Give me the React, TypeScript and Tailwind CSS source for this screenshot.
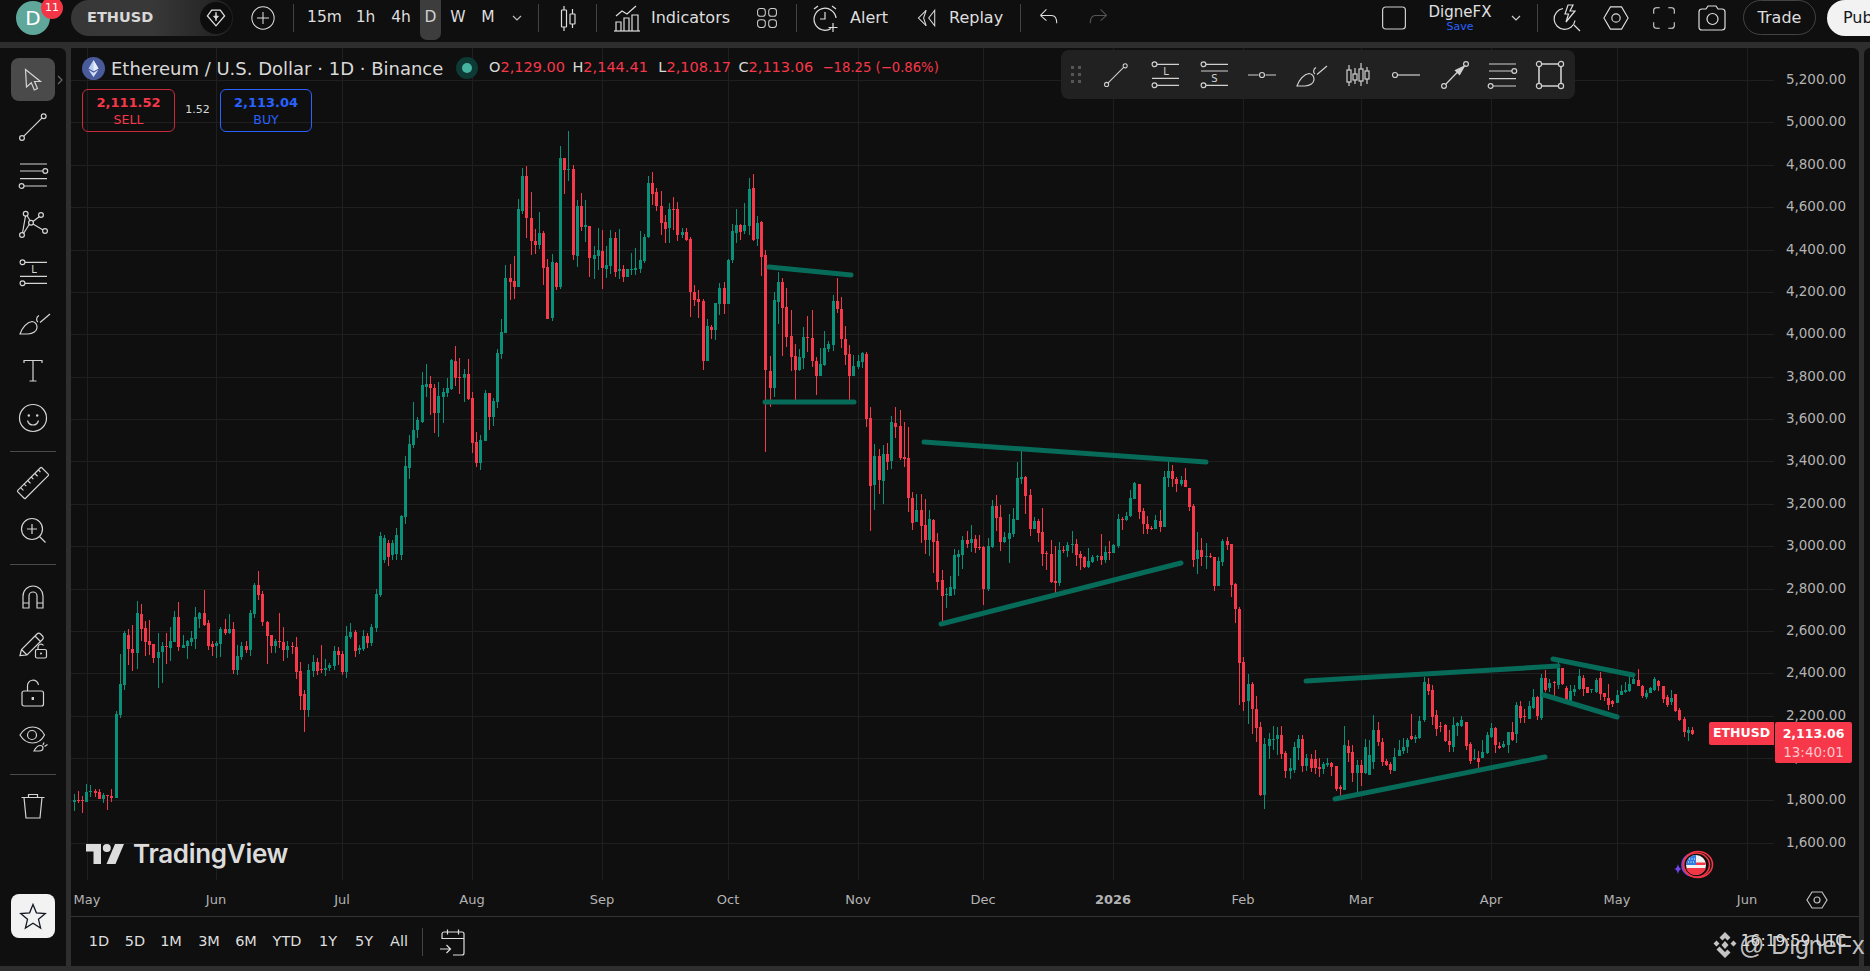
import React from 'react';

// candle data read off the chart: "X colour high top bottom low", in the crop coords of each segment
const SEGMENTS = [
  { x0: 70, y0: 560, rows: `13 g 702 720 726 753,25 r 693 720 723 729,37 r 708 720 723 759,49 g 672 696 726 726,61 g 675 693 696 711,76 r 687 693 699 711,88 r 687 696 717 717,100 g 699 705 717 729,112 r 705 705 708 750,124 r 687 708 714 726,139 g 453 462 714 714,151 g 282 372 465 474,163 g 213 219 375 390,175 r 207 225 267 315,187 r 195 267 279 333,202 g 123 159 279 327,214 r 132 162 207 243,226 r 183 204 246 288,238 r 180 243 255 285,250 r 252 252 294 309,265 g 219 276 294 384,277 g 246 258 276 369,289 r 219 258 261 312,301 g 201 243 264 303,313 g 153 171 246 246,325 r 126 171 261 273,340 g 225 255 264 264,352 g 240 243 258 297,364 g 213 234 246 258,376 g 141 171 237 267,388 g 156 159 177 204,403 r 90 159 195 198,415 r 180 189 258 270,427 r 243 252 261 288,439 g 243 249 258 294,451 g 201 207 252 291,466 r 177 207 219 225,478 g 162 207 219 222,490 r 186 207 330 342,502 g 255 288 330 345,514 g 246 258 291 300,529 r 243 258 270 279,541 g 150 159 270 288,553 g 69 75 162 174,565 r 33 75 105 120,577 r 93 102 186 198,592 r 183 186 228 312,604 r 225 225 258 279,616 g 237 243 258 279,628 r 159 243 246 264,640 r 201 246 270 303,652 g 243 258 270 294,667 r 246 258 261 282,679 r 231 261 336 357,691 r 306 333 408 450,703 r 390 402 450 516,715 g 312 330 450 471,730 g 285 306 333 351,742 r 294 306 333 345,754 r 255 327 330 339,766 g 297 324 330 348,778 g 309 315 324 333,793 g 258 273 318 330,805 r 261 273 285 315,817 r 273 282 336 345,829 g 198 228 336 354,841 g 189 216 231 237,856 r 210 216 273 291,868 g 255 264 270 282,880 g 210 228 267 273,892 r 219 228 249 264,904 g 192 201 249 258,919 g 87 102 204 216` },
  { x0: 70, y0: 130, rows: `931 g 1206 1218 1395 1401,943 g 1215 1225 1290 1299,955 r 1230 1240 1280 1308,967 g 1230 1240 1275 1290,979 g 1195 1215 1272 1290,994 g 1155 1158 1275 1290,1006 g 978 1008 1160 1182,1018 g 915 942 1013 1047,1030 g 816 900 945 954,1042 g 862 870 900 924,1057 g 726 765 876 879,1069 g 702 762 771 801,1081 r 738 762 774 855,1093 r 762 774 849 908,1105 g 756 798 849 921,1120 g 774 786 801 879,1132 g 744 774 789 801,1144 g 687 690 777 780,1156 r 648 693 744 768,1168 r 684 741 744 792,1183 g 717 732 744 816,1195 r 687 732 807 810,1207 r 786 804 939 969,1219 r 906 936 999 1011,1231 g 915 930 999 1020,1246 g 780 789 933 933,1258 r 789 789 861 900,1270 g 804 813 861 888,1282 g 657 669 816 834,1294 g 567 606 672 687,1306 g 405 444 609 609,1321 r 402 444 456 510,1333 r 378 453 471 507,1345 g 207 237 471 471,1357 g 114 138 243 252,1369 r 108 138 264 324,1384 r 186 264 333 375,1396 r 297 333 345 372,1408 g 246 309 345 357,1420 r 303 309 414 465,1432 r 387 411 567 567,1447 g 372 396 564 573,1459 r 396 399 471 480,1471 g 48 84 471 477,1483 r 84 84 120 192,1495 g 3 117 120 153` },
  { x0: 500, y0: 130, rows: `220 r 105 117 375 390,232 g 210 228 378 411,244 r 189 228 291 303,256 g 210 285 291 336,268 r 288 288 384 441,283 g 348 375 387 447,295 g 294 360 378 420,307 r 300 363 414 477,319 g 348 405 417 444,331 g 300 324 408 432,346 r 306 324 426 441,358 g 297 417 423 447,370 r 405 417 441 456,382 g 417 417 441 441,394 g 369 417 420 435,406 g 354 414 420 435,421 g 303 390 417 429,433 g 312 321 393 399,445 g 138 159 321 324,457 r 126 159 192 225,469 r 174 186 228 243,484 r 183 228 279 315,496 r 255 276 297 339,508 g 219 237 294 339,520 r 201 237 240 300,532 r 216 237 315 333,547 g 294 306 315 324,559 r 294 306 330 333,571 r 321 327 486 561,583 r 465 486 510 528,595 r 480 507 516 564,610 r 507 513 693 720,622 g 567 588 693 693,634 r 585 591 600 627,646 g 519 519 600 630,658 g 459 474 522 555,673 r 456 474 522 552,685 g 387 390 522 522,697 g 282 303 390 399,709 g 237 285 309 339,721 r 282 285 306 330,733 g 219 285 303 312,748 g 144 177 288 315,760 r 132 174 330 333,772 g 258 279 327 348,784 r 273 276 381 438,796 r 360 375 720 966,811 r 678 723 774 831,823 g 486 510 774 801,835 g 426 456 516 582,847 r 444 456 534 678,859 r 474 531 621 651,874 r 540 618 681 723,886 r 642 678 720 816,898 g 657 681 720 723,910 g 591 621 684 717,922 r 558 621 624 666,937 r 540 624 693 711,949 r 681 693 738 795,961 g 654 702 738 738,973 g 603 654 705 708,985 g 633 642 657 666,1000 g 495 513 645 663,1012 r 444 513 537 549,1024 r 501 537 627 654,1036 r 588 627 675 705,1048 r 645 672 738 813,1060 g 675 708 738 738,1075 g 675 693 711 717,1087 g 666 669 696 714,1099 r 666 672 867 891,1111 r 831 864 1068 1203,1123 g 942 978 1065 1140,1138 r 957 978 1050 1092,1150 g 945 972 1053 1122,1162 r 939 972 996 1020,1174 g 858 876 993 1017,1186 r 831 879 891 924,1201 r 840 888 984 990,1213 r 876 981 987 1011,1225 r 891 984 1104 1146` },
  { x0: 900, y0: 420, rows: `37 r 216 234 309 330,49 g 222 270 306 306,64 r 222 270 318 369,76 r 237 315 360 402,88 g 270 297 360 408,100 r 297 300 366 459,112 r 339 363 486 510,127 r 450 480 528 618,139 g 504 522 525 564,151 g 468 501 528 528,163 g 387 405 507 525,175 g 390 402 411 468,187 g 348 360 405 447,202 r 333 360 372 384,214 g 315 357 369 396,226 r 345 357 384 399,238 r 345 381 384 390,250 r 378 381 507 555,265 g 354 378 507 513,277 g 240 258 381 384,289 r 225 258 294 333,301 r 255 291 366 393,313 g 336 351 366 369,328 g 282 339 357 429,340 g 264 297 342 351,352 g 126 174 300 300,364 g 93 171 177 192,376 r 168 171 228 282,391 r 207 225 327 348,403 g 291 303 327 327,415 r 297 303 339 366,427 r 264 336 402 438,439 r 393 399 402 450,454 r 360 402 486 489,466 r 378 483 489 519,478 g 366 390 489 498,490 r 378 390 393 399,502 g 366 375 393 411,517 g 333 372 375 399,529 r 357 372 405 438,541 r 393 402 414 450,553 r 408 411 441 444,565 g 384 423 441 444,577 g 405 411 426 429,592 g 405 408 411 423,604 r 342 408 420 435,616 g 378 396 420 429,628 r 363 396 399 420,640 g 372 375 399 399,655 g 282 297 378 384,667 r 291 297 300 330,679 g 276 288 300 303,691 g 210 234 288 291,703 g 186 189 237 237,718 r 192 192 276 297,730 r 264 273 312 342,742 r 288 312 327 342,754 r 318 324 327 330,766 g 285 300 327 327,781 r 270 303 321 336,793 g 153 171 321 321,805 g 120 153 174 201,817 r 135 153 177 201,829 r 171 177 192 216,844 g 168 180 192 198,856 r 144 180 201 201,868 r 204 204 261 273,880 r 252 258 420 441,892 g 336 390 417 462,904 r 354 390 411 438,919 g 369 408 411 447,931 r 399 408 411 414,943 r 411 411 498 513,955 g 411 423 498 498,967 g 357 363 426 438,982 r 351 363 375 390,994 r 372 372 495 531,1006 r 489 492 567 609,1018 r 561 567 729 855,1030 r 711 726 846 873,1045 g 762 792 843 912,1057 r 786 792 867 942,1069 r 828 867 924 966,1081 r 906 921 1125 1128,1093 g 954 972 1125 1167,1108 g 939 957 978 1017,1120 g 918 957 960 990,1132 g 921 945 957 1005,1144 r 918 945 1002 1017,1156 r 993 999 1053 1074,1171 g 1014 1044 1053 1077,1183 g 966 981 1050 1059,1195 g 945 957 984 1020` },
  { x0: 1250, y0: 620, rows: `157 r 345 357 438 456,169 g 402 414 438 453,184 r 402 417 444 456,196 r 390 417 444 462,208 r 414 441 447 471,220 g 426 432 447 462,232 g 414 429 435 441,244 r 426 429 441 468,259 r 438 438 507 513,271 r 495 501 507 540,283 g 318 375 510 510,295 r 360 378 399 426,307 r 375 396 459 486,322 g 420 435 459 516,334 r 420 435 459 498,346 g 357 381 459 462,358 g 360 405 465 465,370 g 285 330 426 447,385 r 306 330 366 378,397 r 354 366 426 438,409 r 417 423 435 438,421 r 426 432 450 462,433 g 384 411 453 453,448 g 360 390 408 408,460 g 354 381 393 402,472 g 354 360 381 399,484 r 282 348 357 360,496 g 345 351 357 369,508 g 288 303 354 357,523 g 171 186 300 306,535 r 174 192 213 225,547 r 195 210 291 315,559 r 270 285 327 348,571 r 306 318 321 336,586 r 312 315 363 366,598 r 330 363 375 396,610 g 291 315 381 396,622 g 306 309 318 348,634 g 288 300 318 321,649 r 306 306 378 390,661 r 366 372 423 432,673 g 387 414 417 420,685 r 393 414 426 447,697 g 360 396 414 414,712 g 336 345 399 402,724 g 309 324 351 354,736 r 321 324 375 399,748 r 366 378 384 387,760 g 363 372 381 384,775 g 336 336 375 399,787 r 306 336 360 363,799 g 246 255 342 369,811 r 243 258 294 309,823 r 267 288 291 309,838 g 243 258 297 297,850 g 207 231 264 267,862 r 228 231 288 300,874 g 162 174 294 300,886 r 150 174 210 216,898 g 177 189 204 216,913 r 183 186 189 231,925 g 117 144 195 207,937 r 144 144 192 195,949 r 198 204 246 249,961 g 195 213 246 249,973 g 195 207 216 228,988 g 147 168 207 210,1000 r 165 174 207 228,1012 r 201 201 219 219,1024 g 207 207 210 219,1039 g 174 180 216 219,1051 r 156 174 222 240,1063 r 219 219 231 243,1075 r 192 234 255 270,1087 r 240 243 252 261,1102 g 210 225 249 249,1114 g 195 213 225 225,1126 g 186 210 216 219,1138 g 159 192 213 216,1150 g 162 177 192 192,1165 r 147 180 198 198,1177 r 195 198 228 234,1189 g 210 219 231 237,1201 g 201 204 219 219,1213 g 171 177 210 213,1225 r 180 183 198 213,1240 r 198 198 237 249,1252 r 225 231 255 261,1264 g 210 234 246 255,1276 r 222 222 273 276,1288 r 264 270 300 303,1303 r 291 297 336 351,1315 g 321 330 339 363,1327 r 321 330 342 345` },
];

const candles = SEGMENTS.flatMap((seg) =>
  seg.rows.split(',').map((row) => {
    const [X, c, hi, top, bot, lo] = row.split(' ');
    const conv = (v: string) => Math.round(seg.y0 + Number(v) / 3);
    return {
      x: Math.round(seg.x0 + Number(X) / 3),
      up: c === 'g',
      hi: conv(hi),
      top: conv(top),
      bot: conv(bot),
      lo: conv(lo),
    };
  })
);

const TREND_LINES = [
  [769, 267, 851, 275],
  [765, 402, 854, 402],
  [924, 442, 1206, 462],
  [941, 624, 1181, 563],
  [1306, 681, 1558, 666],
  [1335, 799, 1545, 757],
  [1553, 659, 1633, 675],
  [1544, 695, 1617, 717],
];

const PRICES = ['5,200.00', '5,000.00', '4,800.00', '4,600.00', '4,400.00', '4,200.00', '4,000.00', '3,800.00', '3,600.00', '3,400.00', '3,200.00', '3,000.00', '2,800.00', '2,600.00', '2,400.00', '2,200.00', '2,000.00', '1,800.00', '1,600.00'];

const GRID_X = [87, 216, 342, 472, 602, 728, 858, 983, 1113, 1243, 1361, 1491, 1617, 1747];
const TIME_LABELS = ['May', 'Jun', 'Jul', 'Aug', 'Sep', 'Oct', 'Nov', 'Dec', '2026', 'Feb', 'Mar', 'Apr', 'May', 'Jun'];

const RED = '#f7374a';
const GREEN = '#089078';

type IcProps = { s?: number; children: React.ReactNode; className?: string };

const Ic = ({ s = 28, children, className }: IcProps) => (
  <svg width={s} height={s} viewBox="0 0 28 28" fill="none" stroke="currentColor" strokeWidth={1.2} className={`shrink-0 overflow-visible ${className ?? ''}`}>
    {children}
  </svg>
);

const LineIcon = ({ s = 28 }: { s?: number }) => (
  <Ic s={s}><path d="M4.8 23.2 22.9 5.1" /><circle cx="3" cy="25" r="2.4" /><circle cx="24.7" cy="3.3" r="2.4" /></Ic>
);
const FibIcon = ({ s = 28 }: { s?: number }) => (
  <Ic s={s}>
    <path d="M1 3h27M1 10h23M1 17.7h27M5 25h23" />
    <circle cx="26.3" cy="10" r="2.4" /><circle cx="2.6" cy="25" r="2.4" />
  </Ic>
);
const XabcdIcon = () => (
  <Ic>
    <path d="M3.5 23 6.500 6M8 5.500l3 5M14 11.500l6.500-5M14 14l10 6M10.500 14 4.500 23.500" />
    <circle cx="6.700" cy="3.700" r="2.400" /><circle cx="22" cy="5" r="2.400" /><circle cx="3" cy="25" r="2.400" /><circle cx="26" cy="21" r="2.400" /><circle cx="12" cy="12.700" r="2.400" />
  </Ic>
);
const LongIcon = ({ s = 28 }: { s?: number }) => (
  <Ic s={s}>
    <path d="M6 3.300h22M1 17.300h27M6 24.300h22" /><circle cx="3.500" cy="3.300" r="2.400" /><circle cx="3.500" cy="24.300" r="2.400" />
    <text x="15" y="14" fontSize="10" textAnchor="middle" fill="currentColor" stroke="none" fontFamily="'DejaVu Sans', sans-serif">L</text>
  </Ic>
);
const ShortIcon = () => (
  <Ic>
    <path d="M6 3.300h22M1 10h27M6 24.300h22" /><circle cx="3.500" cy="3.300" r="2.400" /><circle cx="3.500" cy="24.300" r="2.400" />
    <text x="14.500" y="21" fontSize="10" textAnchor="middle" fill="currentColor" stroke="none" fontFamily="'DejaVu Sans', sans-serif">S</text>
  </Ic>
);
const BrushIcon = () => (
  <Ic>
    <path d="M1 25h8c5 0 9-3 9-6.500 0-3-2-5.500-5-6C8 13 3 19 1 25Z" />
    <path d="M19 13c-2-1-2-5 1-6.500M21 13.500 31 5" />
  </Ic>
);
const SmileIcon = () => (
  <Ic>
    <circle cx="14" cy="14" r="13.500" /><path d="M8.500 16.500c1 3.500 3 4.500 5.500 4.500s4.500-1 5.500-4.500" />
    <circle cx="9.800" cy="11.500" r="1.200" fill="currentColor" stroke="none" /><circle cx="18.200" cy="11.500" r="1.200" fill="currentColor" stroke="none" />
  </Ic>
);
const RulerIcon = () => (
  <Ic>
    <g transform="rotate(-45 14 14)">
      <rect x="-3" y="8.500" width="34" height="11" rx="1" />
      <path d="M2 8.500v4M7 8.500v3M12 8.500v4M17 8.500v3M22 8.500v4M27 8.500v3" />
    </g>
  </Ic>
);
const ZoomIcon = () => (
  <Ic>
    <circle cx="13" cy="13" r="10.500" /><path d="M13 8v10M8 13h10M20.500 20.500l6 6" />
  </Ic>
);
const MagnetIcon = () => (
  <Ic><path d="M4 25V13a10 10 0 0 1 20 0v12h-6V13a4 4 0 0 0-8 0v12ZM4 20h6M18 20h6" /></Ic>
);
const PencilLockIcon = () => (
  <Ic>
    <path d="M1 24.500 2.500 18.500 18 3c1-1 2.500-1 3.500 0l2 2c1 1 1 2.500 0 3.500L8 24Z M16 5l6 6M2.500 18.500l5.500 5.500" />
    <rect x="16.500" y="18.500" width="11" height="8.500" rx="1.500" stroke="#0f0f0f" strokeWidth="3" fill="#0f0f0f" />
    <rect x="16.500" y="18.500" width="11" height="8.500" rx="1.500" />
    <path d="M19 18.500v-2.500a3 3 0 0 1 5.500-1.500" /><circle cx="22" cy="22.500" r="1" fill="currentColor" stroke="none" />
  </Ic>
);
const LockIcon = () => (
  <Ic>
    <rect x="3" y="12" width="21.500" height="15" rx="2" /><path d="M8.500 12V7.500a5.500 5.500 0 0 1 11-1.500" />
    <path d="M13.800 18v3" strokeWidth="2.400" />
  </Ic>
);
const EyeIcon = () => (
  <Ic>
    <path d="M1 11c3-5 7.500-8 12.500-8S23 6 25.500 11c-2.500 5-7 8-12 8S4 16 1 11Z" /><circle cx="13" cy="11" r="4.500" />
    <path d="M15 27h5c3 0 4-1.500 4-3 0-1.500-1-2.500-2.500-2.500C19 21.500 16.500 24 15 27ZM24 21l1-2.500M25.500 22.500l3-2" />
  </Ic>
);
const TrashIcon = () => (
  <Ic>
    <path d="M2.500 5.500h23M5 5.500 7 26h14l2-20.500M9.500 5.500V2.500h9v3" />
  </Ic>
);
const StarIcon = () => (
  <svg width="28" height="28" viewBox="0 0 28 28" fill="none" stroke="#131722" strokeWidth="1.300">
    <path d="M14 2.500 17.400 10.800 26.300 11.500 19.500 17.300 21.600 26 14 21.300 6.400 26 8.500 17.300 1.700 11.500 10.600 10.800Z" />
  </svg>
);

const CellBtn = ({ className, children }: { className: string; children: React.ReactNode }) => (
  <div className={`flex items-center justify-center shrink-0 ${className}`}>{children}</div>
);

const Sep = ({ className }: { className: string }) => <div className={`w-px h-7 bg-[#434343] shrink-0 ${className}`} />;

const Header = () => (
  <header className="h-[42px] shrink-0 flex items-center pb-[6px] bg-[#0f0f0f] text-[#dedede] text-[16px]">
    <div className="relative ml-4 w-[34px] h-[34px] rounded-full bg-[#5fa79a] flex items-center justify-center text-white text-[20px] shrink-0">
      D
      <div className="absolute -top-[4px] left-[25px] w-[22px] h-[22px] rounded-full bg-[#f23645] flex items-center justify-center text-[11px] text-white">11</div>
    </div>
    <div className="ml-[21px] w-[162px] h-[36px] self-start rounded-full bg-gradient-to-r from-[#373737] via-[#383838] to-[#1f1f1f] flex items-center justify-between pl-4 pr-[1px] shrink-0">
      <span className="font-bold text-[14.5px] text-[#d8d8d8]">ETHUSD</span>
      <div className="w-[32px] h-[32px] rounded-full bg-[#0d0d0d] flex items-center justify-center text-[#e0e0e0]">
        <Ic s={20}><path d="M8 3h12l6 8-12 14L2 11Z" strokeWidth="1.800" /><path d="M14 6v12" strokeWidth="2" /><path d="M10.500 11.500h7L14 15Z" fill="currentColor" /></Ic>
      </div>
    </div>
    <CellBtn className="w-[60px]">
      <Ic s={24}><circle cx="14" cy="14" r="13" /><path d="M14 7v14M7 14h14" /></Ic>
    </CellBtn>
    <Sep className="" />
    <CellBtn className="w-[49px] ml-[6px] text-[15.5px]">15m</CellBtn>
    <CellBtn className="w-[33px] text-[15.5px]">1h</CellBtn>
    <CellBtn className="w-[38px] text-[15.5px]">4h</CellBtn>
    <CellBtn className="w-[21px] h-10 self-start rounded-b-[7px] bg-[#3d3d3d] text-[#d0d0d0] text-[15.5px] pb-[4px]">D</CellBtn>
    <CellBtn className="w-[34px] text-[15.5px]">W</CellBtn>
    <CellBtn className="w-[26px] text-[15.5px]">M</CellBtn>
    <CellBtn className="w-[32px]">
      <svg width="12" height="12" viewBox="0 0 12 12" fill="none" stroke="#bdbdbd" strokeWidth="1.200"><path d="M2 4l4 4 4-4" /></svg>
    </CellBtn>
    <Sep className="ml-[5px]" />
    <CellBtn className="w-[57px]">
      <Ic>
        <path d="M10 2v4M10 23v4M18.500 5v5M18.500 20v4" />
        <rect x="7.500" y="6" width="5" height="17" rx="0.500" /><rect x="16" y="10" width="5" height="10" rx="0.500" />
      </Ic>
    </CellBtn>
    <Sep className="" />
    <div className="ml-[17px] shrink-0">
      <Ic>
        <path d="M2 12 8 7l5 3 9-8" /><path d="M2 27v-9h5v9M10 27V14h5v13M18 27V11h6v16" /><path d="M0 27h26" />
      </Ic>
    </div>
    <span className="ml-[9px] w-[80px] shrink-0 whitespace-nowrap">Indicators</span>
    <div className="ml-[24px] shrink-0 text-[#d0d0d0]">
      <Ic s={24}><rect x="3" y="3" width="9" height="9" rx="3" /><rect x="16" y="3" width="9" height="9" rx="3" /><rect x="3" y="16" width="9" height="9" rx="3" /><rect x="16" y="16" width="9" height="9" rx="3" /></Ic>
    </div>
    <Sep className="ml-[17px]" />
    <div className="ml-[14px] shrink-0">
      <Ic>
        <path d="M20 24.500A11 11 0 1 1 25 14" /><path d="M14 8v7H9M3 5l4-3M25 5l-4-3M22 19v9M17.500 23.500h9" />
      </Ic>
    </div>
    <span className="ml-[11px] w-[42px] shrink-0">Alert</span>
    <div className="ml-[23px] shrink-0">
      <Ic s={24}><path d="M13 5 4 14l9 9M23 5l-7 9 7 9Z" /><path d="M13 5l-3 9 3 9" /></Ic>
    </div>
    <span className="ml-[10px] w-[54px] shrink-0">Replay</span>
    <Sep className="ml-[17px]" />
    <div className="ml-4 shrink-0">
      <Ic s={24}><path d="M4 11h13c4 0 6 3 6 9M4 11l7-7M4 11l7 6" /></Ic>
    </div>
    <div className="ml-[25px] shrink-0 text-[#565656]">
      <Ic s={24}><path d="M24 11H11c-4 0-6 3-6 9M24 11l-7-7M24 11l-7 6" /></Ic>
    </div>

    <div className="ml-auto flex items-center h-[36px] shrink-0">
      <div className="text-[#cfcfcf] shrink-0">
        <svg width="24" height="24" viewBox="0 0 24 24" fill="none" stroke="currentColor" strokeWidth="1.200"><rect x="0.600" y="1" width="22.800" height="22" rx="3" /></svg>
      </div>
      <div className="ml-[14px] w-[80px] flex flex-col items-center shrink-0">
        <span className="text-[15px] leading-[16px] text-[#e0e0e0]">DigneFX</span>
        <span className="text-[11px] leading-[13px] text-[#2962ff]">Save</span>
      </div>
      <div className="ml-2 w-4 flex justify-center shrink-0">
        <svg width="12" height="12" viewBox="0 0 12 12" fill="none" stroke="#d0d0d0" strokeWidth="1.200"><path d="M2 4l4 4 4-4" /></svg>
      </div>
      <Sep className="ml-[13px]" />
      <div className="ml-[15px] shrink-0">
        <Ic>
          <path d="M10 4.500a10.500 10.500 0 1 0 12 12M21 21l6 6" /><path d="M15 1h5l-3 6h5L13 18l2.500-8H12Z" />
        </Ic>
      </div>
      <div className="ml-[22px] shrink-0">
        <Ic s={26}><path d="M8 2h12l7 12-7 12H8L1 14Z" /><circle cx="14" cy="14" r="4.500" /></Ic>
      </div>
      <div className="ml-[23px] shrink-0">
        <Ic s={24}><path d="M9 2H5C3 2 2 3 2 5v4M19 2h4c2 0 3 1 3 3v4M9 26H5c-2 0-3-1-3-3v-4M19 26h4c2 0 3-1 3-3v-4" /></Ic>
      </div>
      <div className="ml-[22px] shrink-0">
        <Ic><path d="M1 8c0-2 1-3 3-3h4l2-3h8l2 3h4c2 0 3 1 3 3v15c0 2-1 3-3 3H4c-2 0-3-1-3-3Z" /><circle cx="14.500" cy="15" r="5.500" /></Ic>
      </div>
      <div className="ml-[17px] w-[73px] h-[35px] self-start rounded-full border border-[#434343] flex items-center justify-center text-[16px] shrink-0">Trade</div>
      <div className="ml-[11px] w-[43px] h-[36px] self-start rounded-l-full bg-[#f2f2f2] text-[#131722] text-[16px] flex items-center pl-4 overflow-hidden shrink-0">Pub</div>
    </div>
  </header>
);

const ToolCell = ({ className, children }: { className: string; children: React.ReactNode }) => (
  <div className={`flex items-center justify-center shrink-0 ${className}`}>{children}</div>
);

const SideBar = () => (
  <aside className="relative w-[66px] shrink-0 bg-[#0f0f0f] rounded-tr-md flex flex-col items-center pt-[10px] pb-[28px] text-[#d4d4d4]">
    <div className="w-11 h-[43px] rounded-[8px] bg-[#4a4a4a] flex items-center justify-center shrink-0">
      <svg width="28" height="28" viewBox="0 0 28 28" fill="none" stroke="currentColor" strokeWidth="1.200">
        <path d="M6.500 3.500 21.500 15.500h-6l3 7-3.200 1.500-3-7.200-4.800 4.200Z" />
      </svg>
    </div>
    <svg className="absolute left-[56px] top-[26px]" width="8" height="12" viewBox="0 0 8 12" fill="none" stroke="#6a6a6a" strokeWidth="1.200"><path d="M2 2l4 4-4 4" /></svg>
    <ToolCell className="h-[52px]"><LineIcon /></ToolCell>
    <ToolCell className="h-[44px]"><FibIcon /></ToolCell>
    <ToolCell className="h-[54px]"><XabcdIcon /></ToolCell>
    <ToolCell className="h-[44px]"><LongIcon /></ToolCell>
    <ToolCell className="h-[56px]"><BrushIcon /></ToolCell>
    <ToolCell className="h-[38px]">
      <Ic><path d="M5 7V4.500h18V7M14 4.500V25M10.500 25h7" /></Ic>
    </ToolCell>
    <ToolCell className="h-[58px]"><SmileIcon /></ToolCell>
    <div className="mt-1 w-[46px] h-px bg-[#4a4a4a] shrink-0" />
    <ToolCell className="h-[62px]"><RulerIcon /></ToolCell>
    <ToolCell className="h-[32px]"><ZoomIcon /></ToolCell>
    <div className="mt-[18px] w-[46px] h-px bg-[#4a4a4a] shrink-0" />
    <ToolCell className="h-[64px]"><MagnetIcon /></ToolCell>
    <ToolCell className="h-[32px]"><PencilLockIcon /></ToolCell>
    <ToolCell className="h-[64px]"><LockIcon /></ToolCell>
    <ToolCell className="h-[26px]"><EyeIcon /></ToolCell>
    <div className="mt-[23px] w-[46px] h-px bg-[#4a4a4a] shrink-0" />
    <ToolCell className="h-[62px]"><TrashIcon /></ToolCell>
    <button className="mt-auto w-11 h-11 rounded-[8px] bg-[#f2f2f2] flex items-center justify-center shrink-0"><StarIcon /></button>
  </aside>
);

const EthMark = () => (
  <svg width="23" height="23" viewBox="0 0 23 23" className="shrink-0">
    <circle cx="11.500" cy="11.500" r="11.500" fill="#4a5b9c" />
    <path d="M11.500 3 6.500 11.500 11.500 14.300 16.500 11.500Z" fill="#b6cdf0" />
    <path d="M11.500 3 16.500 11.500 11.500 14.300Z" fill="#e6eefa" />
    <path d="M6.500 12.700 11.500 20 16.500 12.700 11.500 15.700Z" fill="#d2e0f6" />
  </svg>
);

const Legend = () => (
  <div className="absolute left-[11px] top-[8px] flex flex-col">
    <div className="flex items-center h-6 whitespace-nowrap">
      <EthMark />
      <span className="ml-[6px] w-[334px] text-[18px] text-[#d9d9d9] shrink-0">Ethereum / U.S. Dollar · 1D · Binance</span>
      <div className="ml-[11px] w-[22px] h-[22px] rounded-full bg-[#0d3a34] flex items-center justify-center shrink-0">
        <div className="w-[10px] h-[10px] rounded-full bg-[#46b3a2]" />
      </div>
      <div className="ml-[11px] flex items-center text-[14.5px] text-[#f7374a]">
        <span className="text-[#d9d9d9]">O</span><span className="w-[72px]">2,129.00</span>
        <span className="text-[#d9d9d9]">H</span><span className="w-[75px]">2,144.41</span>
        <span className="text-[#d9d9d9]">L</span><span className="w-[72px]">2,108.17</span>
        <span className="text-[#d9d9d9]">C</span><span className="w-[74px]">2,113.06</span>
        <span className="text-[13.2px]">−18.25 (−0.86%)</span>
      </div>
    </div>
    <div className="mt-[9px] flex items-center">
      <div className="w-[93px] h-[43px] rounded-[6px] border border-[#c92a3a] flex flex-col items-center justify-center leading-none">
        <span className="text-[13px] leading-[17px] font-bold text-[#f7374a]">2,111.52</span>
        <span className="text-[12.5px] leading-[17px] text-[#f7374a]">SELL</span>
      </div>
      <span className="w-[45px] text-center text-[11px] text-[#d9d9d9]">1.52</span>
      <div className="w-[92px] h-[43px] rounded-[6px] border border-[#2962ff] flex flex-col items-center justify-center leading-none">
        <span className="text-[13px] leading-[17px] font-bold text-[#2962ff]">2,113.04</span>
        <span className="text-[12.5px] leading-[17px] text-[#2962ff]">BUY</span>
      </div>
    </div>
  </div>
);

const FloatBar = () => (
  <div className="absolute left-[990px] top-[2px] w-[514px] h-[49px] rounded-[8px] bg-[#212121] flex items-center text-[#d0d0d0]">
    <CellBtn className="w-[30px]">
      <svg width="10" height="18" viewBox="0 0 10 18" fill="#555"><rect x="0" y="0" width="3" height="3" /><rect x="7" y="0" width="3" height="3" /><rect x="0" y="7" width="3" height="3" /><rect x="7" y="7" width="3" height="3" /><rect x="0" y="14" width="3" height="3" /><rect x="7" y="14" width="3" height="3" /></svg>
    </CellBtn>
    <CellBtn className="w-[49px]"><LineIcon s={24} /></CellBtn>
    <CellBtn className="w-[50px]"><LongIcon /></CellBtn>
    <CellBtn className="w-[48px]"><ShortIcon /></CellBtn>
    <CellBtn className="w-[47px]">
      <Ic><path d="M0 14h10.500M17.500 14H28" /><circle cx="14" cy="14" r="2.500" /></Ic>
    </CellBtn>
    <CellBtn className="w-[50px]"><BrushIcon /></CellBtn>
    <CellBtn className="w-[46px]">
      <Ic>
        <path d="M5 4v5M5 21v4M11 7v6M11 19v4M17 2v6M17 20v5M23 6v4M23 18v5" />
        <rect x="3" y="9" width="4" height="12" /><rect x="9" y="13" width="4" height="6" /><rect x="15" y="8" width="4" height="12" /><rect x="21" y="10" width="4" height="8" />
      </Ic>
    </CellBtn>
    <CellBtn className="w-[50px]">
      <Ic><circle cx="3" cy="14" r="2.500" /><path d="M5.500 14H28" /></Ic>
    </CellBtn>
    <CellBtn className="w-[48px]">
      <Ic>
        <circle cx="3" cy="25" r="2.400" /><circle cx="25" cy="3" r="2.400" /><path d="M5 23 18 9.500" />
        <path d="M23.500 5 14.500 9.500 18.500 13.500Z" fill="currentColor" />
      </Ic>
    </CellBtn>
    <CellBtn className="w-[46px]"><FibIcon /></CellBtn>
    <CellBtn className="w-[50px]">
      <Ic>
        <path d="M6 3h16M6 25h16M3 6v16M25 6v16" strokeWidth="1.600" />
        <circle cx="3" cy="3" r="2.600" /><circle cx="25" cy="3" r="2.600" /><circle cx="3" cy="25" r="2.600" /><circle cx="25" cy="25" r="2.600" />
      </Ic>
    </CellBtn>
  </div>
);

const Watermark = () => (
  <div className="absolute left-[15px] bottom-[13px] flex items-center text-[#dcdcdc]">
    <svg width="38" height="20" viewBox="0 0 38 20" fill="currentColor" className="shrink-0">
      <path d="M0 0h15v20H7.500V7.500H0Z" /><circle cx="20.800" cy="4" r="4" /><path d="M29 0h9l-8.500 20H20.500Z" />
    </svg>
    <span className="ml-[9px] text-[26px] leading-none font-semibold tracking-[-0.3px] font-['Inter',sans-serif] whitespace-nowrap">TradingView</span>
  </div>
);

const FlagMark = () => (
  <svg width="44" height="32" viewBox="0 0 44 32" className="absolute left-[1600px] top-[802px]">
    <path d="M2 19c3 0 4-1 5-5 1 4 2 5 5 5-3 0-4 1-5 5-1-4-2-5-5-5Z" fill="#7046f0" />
    <ellipse cx="21" cy="15" rx="10" ry="11" fill="none" stroke="#7046f0" strokeWidth="1.600" />
    <ellipse cx="27" cy="14.500" rx="14.500" ry="13" fill="#0f0f0f" stroke="#f23645" strokeWidth="1.600" />
    <ellipse cx="25.500" cy="15" rx="13" ry="12" fill="none" stroke="#f23645" strokeWidth="1.600" />
    <circle cx="25" cy="15" r="10" fill="#f2f2f2" />
    <path d="M15.500 12.500h19v2.500h-19ZM15.800 18h18.400v2c-2 3-5 5-9.200 5s-7.200-2-9.200-5Z" fill="#f23645" />
    <path d="M15 15a10 10 0 0 1 10-10v10Z" fill="#2f7de0" />
    <path d="M18 9h6M17 12h7" stroke="#fff" strokeWidth="1" strokeDasharray="1 1.500" />
  </svg>
);

const ChartPane = () => (
  <div className="relative flex-1 overflow-hidden">
    <svg width="1703" height="832" viewBox="71 48 1703 832" className="block">
      {PRICES.map((_, i) => {
        const y = Math.round(80 + i * 42.38);
        return <rect key={i} x="71" y={y} width="1703" height="1" fill="#1f1f1f" shapeRendering="crispEdges" />;
      })}
      {GRID_X.map((x) => (
        <rect key={x} x={x} y="48" width="1" height="832" fill="#1f1f1f" shapeRendering="crispEdges" />
      ))}
      <g shapeRendering="crispEdges">
        {candles.map((c, i) => (
          <g key={i} fill={c.up ? GREEN : RED}>
            <rect x={c.x} y={c.hi} width="1" height={Math.max(c.lo - c.hi, 1)} />
            <rect x={c.x - 1} y={c.top} width="3" height={Math.max(c.bot - c.top, 1)} />
          </g>
        ))}
      </g>
      {TREND_LINES.map(([x1, y1, x2, y2], i) => (
        <line key={i} x1={x1} y1={y1} x2={x2} y2={y2} stroke="#076b59" strokeWidth="5" strokeLinecap="round" />
      ))}
    </svg>
    <Legend />
    <FloatBar />
    <Watermark />
    <FlagMark />
  </div>
);

const PriceAxis = () => (
  <div className="relative w-[85px] shrink-0 pt-[10px] pr-[13px] text-[13.5px] text-[#b4b4b4]">
    {PRICES.map((p) => (
      <div key={p} className="h-[42.38px] flex items-center justify-end">{p}</div>
    ))}
    <div className="absolute left-[1px] top-[674px] w-[77px] h-[41px] rounded-[2px] bg-[#f7374a] flex flex-col items-center justify-center leading-none">
      <span className="text-[12.5px] leading-[19px] font-bold text-white">2,113.06</span>
      <span className="text-[13.5px] leading-[18px] text-[#ffc7cd]">13:40:01</span>
    </div>
    <div className="absolute -left-[65px] top-[674px] w-[65px] h-[23px] rounded-l-[2px] bg-[#f7374a] flex items-center justify-center text-[12.5px] font-bold text-white">ETHUSD</div>
  </div>
);

const TimeAxis = () => (
  <div className="h-[37px] shrink-0 flex items-center pt-[3px] border-b border-[#333] text-[13px] text-[#b4b4b4]">
    {TIME_LABELS.map((t, i) => (
      <div
        key={i}
        className={`w-0 flex justify-center whitespace-nowrap ${t === '2026' ? 'font-bold' : ''}`}
        style={{ marginLeft: i === 0 ? GRID_X[0] - 71 : GRID_X[i] - GRID_X[i - 1] }}
      >
        {t}
      </div>
    ))}
    <div className="ml-auto mr-[31px] text-[#c0c0c0]">
      <svg width="22" height="22" viewBox="0 0 22 22" fill="none" stroke="currentColor" strokeWidth="1.200"><path d="M6 3h10l5 8-5 8H6l-5-8Z" /><circle cx="11" cy="11" r="3" /></svg>
    </div>
  </div>
);

const RANGES: [string, string][] = [['1D', 'w-[36px]'], ['5D', 'w-[36px]'], ['1M', 'w-[36px]'], ['3M', 'w-[40px]'], ['6M', 'w-[34px]'], ['YTD', 'w-[48px]'], ['1Y', 'w-[34px]'], ['5Y', 'w-[38px]'], ['All', 'w-[32px]']];

const BottomBar = () => (
  <div className="relative flex-1 flex items-center pl-[10px] pr-[13px] text-[14.5px] text-[#dedede]">
    {RANGES.map(([label, w]) => (
      <CellBtn key={label} className={w}>{label}</CellBtn>
    ))}
    <Sep className="ml-[7px]" />
    <div className="ml-4 shrink-0">
      <Ic>
        <path d="M3 11V6c0-1 1-2 2-2h18c1 0 2 1 2 2v19c0 1-1 2-2 2h-9M3 10.500h22M8.500 1.500v5M19.500 1.500v5M1 21h10M7.500 17l4 4-4 4" />
      </Ic>
    </div>
    <span className="ml-auto text-[15.5px] text-[#dedede]">16:19:59 UTC</span>
    <div className="absolute left-[1641px] top-[15px] flex items-center text-[#d8d8d8]/90">
      <svg width="26" height="26" viewBox="0 0 26 26" fill="currentColor" className="shrink-0">
        <path d="M13 0 18.500 5.500 15.500 8.500 13 6 10.500 8.500 7.500 5.500ZM4.500 8.500 7.500 11.500 4.500 14.500 1.500 11.500ZM21.500 8.500 24.500 11.500 21.500 14.500 18.500 11.500ZM13 9 16.500 13 13 17 9.500 13ZM7.500 14.500 10.500 17.500 13 20 15.500 17.500 18.500 20.500 13 26 7.500 20.500 4.500 17.500Z" />
      </svg>
      <span className="ml-[1px] text-[25px] leading-none whitespace-nowrap font-['Liberation_Sans',sans-serif]">@ DigneFx</span>
    </div>
  </div>
);

export default function App() {
  return (
    <div className="w-[1870px] h-[971px] overflow-hidden flex flex-col bg-[#2e2e2e] font-['DejaVu_Sans',sans-serif]">
      <Header />
      <main className="flex-1 min-h-0 flex gap-[5px] pt-[6px] pb-[5px]">
        <SideBar />
        <section className="w-[1788px] shrink-0 flex flex-col bg-[#0f0f0f] rounded-tr-md">
          <div className="h-[832px] shrink-0 flex">
            <ChartPane />
            <PriceAxis />
          </div>
          <TimeAxis />
          <BottomBar />
        </section>
        <div className="flex-1 bg-[#0f0f0f] rounded-tl-md" />
      </main>
    </div>
  );
}
